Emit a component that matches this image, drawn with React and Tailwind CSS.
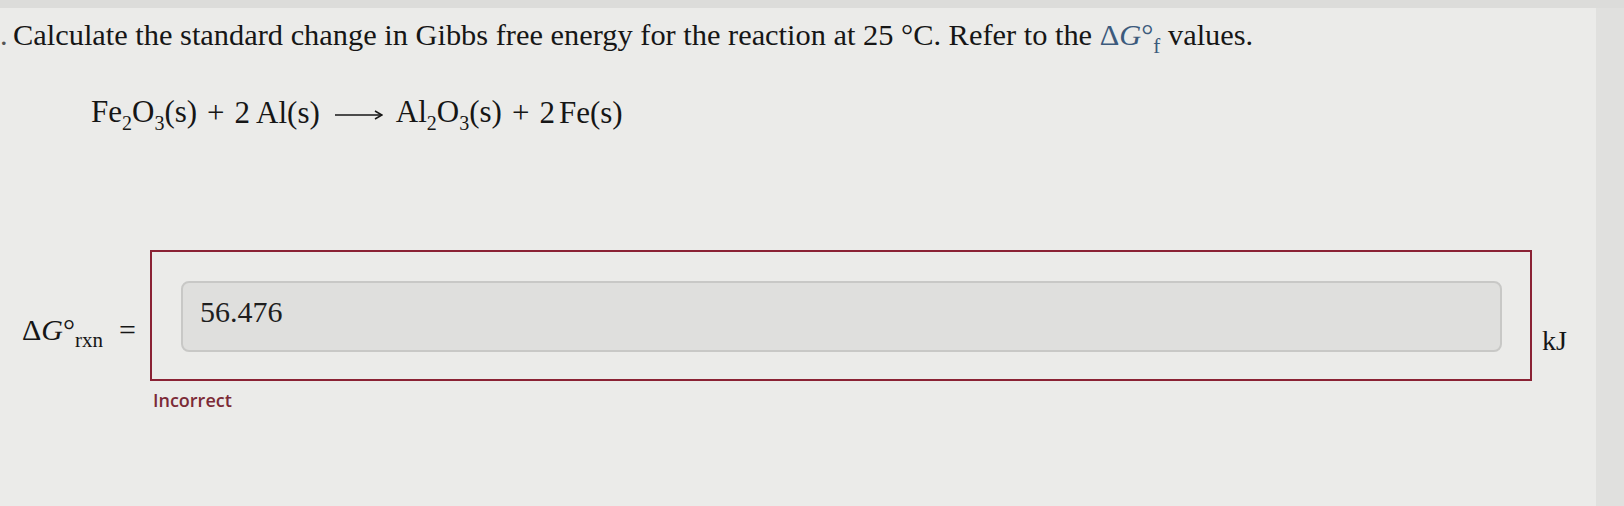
import React from "react";

const serif = "font-['Liberation_Serif','Times_New_Roman',serif]";

function Sub({ children, size = "text-[20px]", top = "top-[8px]" }) {
  return <span className={`relative ${top} ${size}`}>{children}</span>;
}

export default function App() {
  return (
    <div className="w-[1624px] h-[506px] bg-[#dcdcda] flex flex-col overflow-hidden">
      <div className="h-[8px] shrink-0" />
      <div className="flex flex-1">
        <div className={`flex-1 bg-[#ebebe9] text-[#161616] ${serif}`}>
          {/* Title */}
          <div className="relative mt-[9px] h-[36px] leading-[36px] text-[30.4px] pl-[13px] whitespace-nowrap">
            <span className="absolute left-[0px] top-0 text-[#555]">.</span>
            Calculate the standard change in Gibbs free energy for the reaction at 25 °C. Refer to the{" "}
            <span className="text-[#3c5a7c]">
              Δ<span className="italic">G</span>°<Sub size="text-[21px]">f</Sub>
            </span>{" "}
            values.
          </div>

          {/* Equation */}
          <div className="mt-[42px] h-[36px] leading-[36px] text-[31px] pl-[91px] whitespace-nowrap flex items-center">
            <span>
              Fe<Sub>2</Sub>O<Sub>3</Sub>(s)
            </span>
            <span className="mx-[10px]">+</span>
            <span>2</span>
            <span className="ml-[6px]">Al(s)</span>
            <svg width="48" height="12" viewBox="0 0 48 12" className="ml-[15px] mr-[13px] mt-[3px]">
              <line x1="0" y1="6" x2="46" y2="6" stroke="#161616" strokeWidth="1.5" />
              <path d="M40 2 L47 6 L40 10" fill="none" stroke="#161616" strokeWidth="1.5" />
            </svg>
            <span>
              Al<Sub>2</Sub>O<Sub>3</Sub>(s)
            </span>
            <span className="mx-[10px]">+</span>
            <span>2</span>
            <span className="ml-[4px]">Fe(s)</span>
          </div>

          {/* Answer row */}
          <div className="mt-[119px] flex items-start">
            <div className="w-[150px] shrink-0 pl-[22px] mt-[62px] h-[36px] leading-[36px] text-[30px] whitespace-nowrap flex">
              <span>
                Δ<span className="italic">G</span>°<Sub size="text-[21px]" top="top-[7px]">rxn</Sub>
              </span>
              <span className="ml-[16px]">=</span>
            </div>
            <div className="flex flex-col">
              <div className="w-[1382px] h-[131px] border-2 border-[#8a2234] pl-[29px] pt-[29px]">
                <div className="w-[1321px] h-[71px] bg-[#dfdfdd] border-2 border-[#c8c8c6] rounded-[8px] pl-[17px] pt-[11px]">
                  <div className="h-[36px] leading-[36px] text-[30px] text-[#1e1e1e]">56.476</div>
                </div>
              </div>
              <div className="mt-[8px] pl-[3px] text-[18px] leading-[22px] font-semibold text-[#7b2a36] font-['Open_Sans',sans-serif]">
                Incorrect
              </div>
            </div>
            <div className="ml-[10px] mt-[75px] h-[32px] leading-[32px] text-[28px]">kJ</div>
          </div>
        </div>
        <div className="w-[28px] shrink-0 bg-[#e0e0de]" />
      </div>
    </div>
  );
}
